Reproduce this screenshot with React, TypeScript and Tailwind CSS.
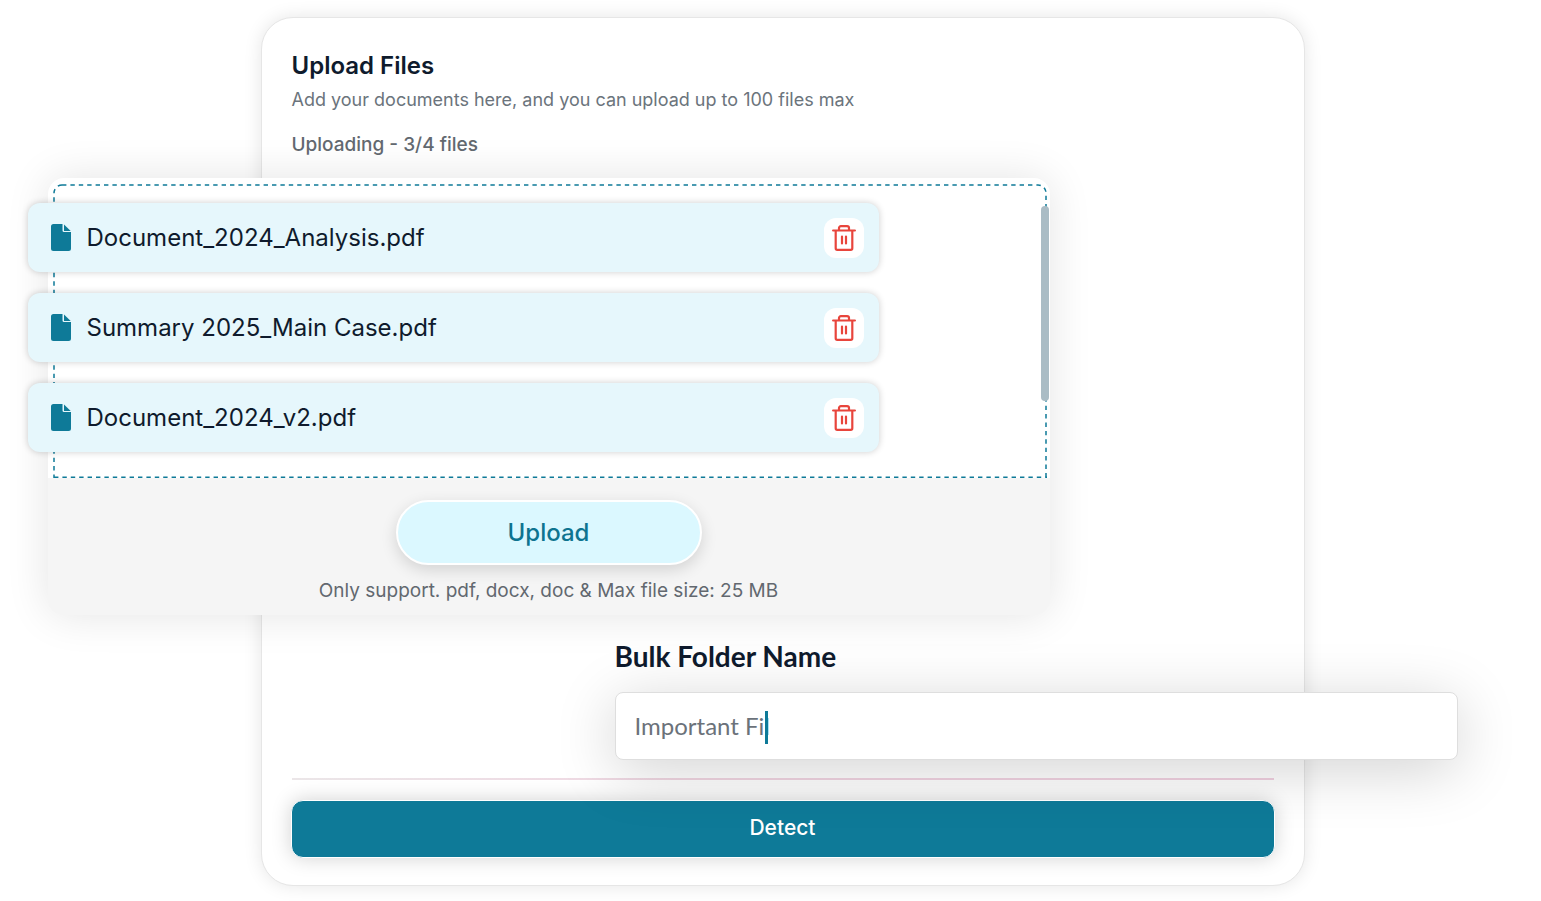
import { useState } from 'react'

const initialFiles = ['Document_2024_Analysis.pdf', 'Summary 2025_Main Case.pdf', 'Document_2024_v2.pdf']

function FileIcon() {
  return (
    <svg width="20" height="27" viewBox="0 0 20 27" fill="#0e7a98" className="shrink-0" aria-hidden="true">
      <path d="M2.5 0H11.500v6.500A1.500 1.500 0 0 0 13 8H20v16.500a2.500 2.500 0 0 1-2.500 2.500h-15A2.500 2.500 0 0 1 0 24.500v-22A2.500 2.500 0 0 1 2.500 0z" />
      <path d="M13 0.500 19.700 7H13z" />
    </svg>
  )
}

function TrashIcon() {
  return (
    <svg
      width="24"
      height="26"
      viewBox="0 0 24 26"
      fill="none"
      stroke="#e8453c"
      strokeWidth="2.200"
      strokeLinecap="round"
      strokeLinejoin="round"
      aria-hidden="true"
    >
      <path d="M1.100 5.500h21.800" />
      <path d="M7 5V3a1.900 1.900 0 0 1 1.900-1.900h6.200a1.900 1.900 0 0 1 1.900 1.900v2" />
      <path d="M3.700 6v17.300a1.500 1.500 0 0 0 1.500 1.500h13.600a1.500 1.500 0 0 0 1.500-1.500V6" />
      <path d="M10 11.500v7M14 11.500v7" />
    </svg>
  )
}

function DropOutline() {
  return (
    <svg
      className="pointer-events-none absolute inset-0 h-full w-full overflow-hidden"
      fill="none"
      stroke="#0e7a98"
      strokeWidth="1.500"
      strokeDasharray="4.400 4"
      aria-hidden="true"
    >
      <rect x="1" y="1" width="calc(100% - 2px)" height="120%" rx="8" />
      <line x1="1" y1="100%" x2="100%" y2="100%" strokeWidth="3" />
    </svg>
  )
}

export default function App() {
  const [files, setFiles] = useState(initialFiles)
  const [folder, setFolder] = useState('Important Fil')

  return (
    <main className="overflow-x-clip bg-white pt-[17px] pb-4 pl-6 font-['Inter',sans-serif] text-[#0f1b2d]">
      <section className="mx-auto max-w-[1044px] rounded-[32px] border border-[#e6e6e6] bg-white px-[30px] pt-8 pb-[27px] shadow-[0_0_18px_rgba(0,0,0,0.1)]">
        <h1 className="text-[24px] leading-8 font-semibold">Upload Files</h1>
        <p className="mt-[6px] text-[18px] leading-6 text-[#6b747c]">
          Add your documents here, and you can upload up to 100 files max
        </p>
        <p className="mt-[21px] text-[19px] leading-6 font-medium text-[#62686f]">Uploading - 3/4 files</p>

        <div className="mt-[21px] mr-[224px] -ml-[244px] rounded-2xl bg-[#f5f5f5] shadow-[0_0_44px_rgba(0,0,0,0.11)]">
          <div className="relative rounded-t-2xl bg-white pt-[6px] pr-[3px] pl-[5px]">
            <div className="relative pt-[19px] pb-[26px]">
              <DropOutline />
              <ul className="relative mr-[168px] -ml-[25px] flex flex-col gap-[21px]">
                {files.map((name) => (
                  <li
                    key={name}
                    className="flex h-[69px] items-center rounded-xl bg-[#e6f7fc] pr-[15px] pl-[23px] shadow-[0_0_7px_rgba(0,0,0,0.2)]"
                  >
                    <FileIcon />
                    <span className="ml-4 flex-1 pt-px text-[24px] leading-8">{name}</span>
                    <button
                      type="button"
                      aria-label={`Delete ${name}`}
                      onClick={() => setFiles(files.filter((f) => f !== name))}
                      className="flex size-10 items-center justify-center rounded-xl bg-white"
                    >
                      <TrashIcon />
                    </button>
                  </li>
                ))}
              </ul>
            </div>
            <div className="absolute top-7 right-px h-[195px] w-2 rounded-full bg-[#aabcc5]" />
          </div>

          <div className="flex flex-col items-center pt-[22px] pb-3">
            <button
              type="button"
              className="h-[65px] w-[306px] rounded-full border-2 border-white bg-[#dbf8ff] pt-px text-[24px] leading-8 font-medium text-[#0e7490] shadow-[0_5px_16px_rgba(0,0,0,0.14)]"
            >
              Upload
            </button>
            <p className="mt-[14px] text-[19px] leading-6 text-[#62686f]">
              Only support. pdf, docx, doc &amp; Max file size: 25 MB
            </p>
          </div>
        </div>

        <div className="mt-[25px] -mr-[184px] ml-[323px] font-['Lato',sans-serif]">
          <label htmlFor="folder" className="block text-[28px] leading-8 font-bold">
            Bulk Folder Name
          </label>
          <div className="relative mt-5">
            <input
              id="folder"
              type="text"
              value={folder}
              onChange={(e) => setFolder(e.target.value)}
              className="h-[68px] w-full rounded-lg border border-[#dedede] bg-white px-[19px] pb-[2px] text-[24px] leading-8 text-[#6b727a] shadow-[0_10px_60px_rgba(0,0,0,0.18)] outline-none"
            />
            <div className="pointer-events-none absolute top-[19px] left-[150px] h-[33px] w-[3px] bg-[#0e7a98]" />
          </div>
        </div>

        <hr className="mt-[18px] h-[2px] border-0 bg-linear-to-r from-[#ebe6e8] via-[#f0d6e2] via-40% to-[#f0d0e0]" />
        <div className="-mx-px mt-5">
          <button
            type="button"
            className="flex h-[58px] w-full items-center justify-center rounded-xl border border-white bg-[#0e7a98] pb-[2px] text-[21px] leading-7 font-medium text-white shadow-[0_0_20px_rgba(0,0,0,0.18)]"
          >
            Detect
          </button>
        </div>
      </section>
    </main>
  )
}
